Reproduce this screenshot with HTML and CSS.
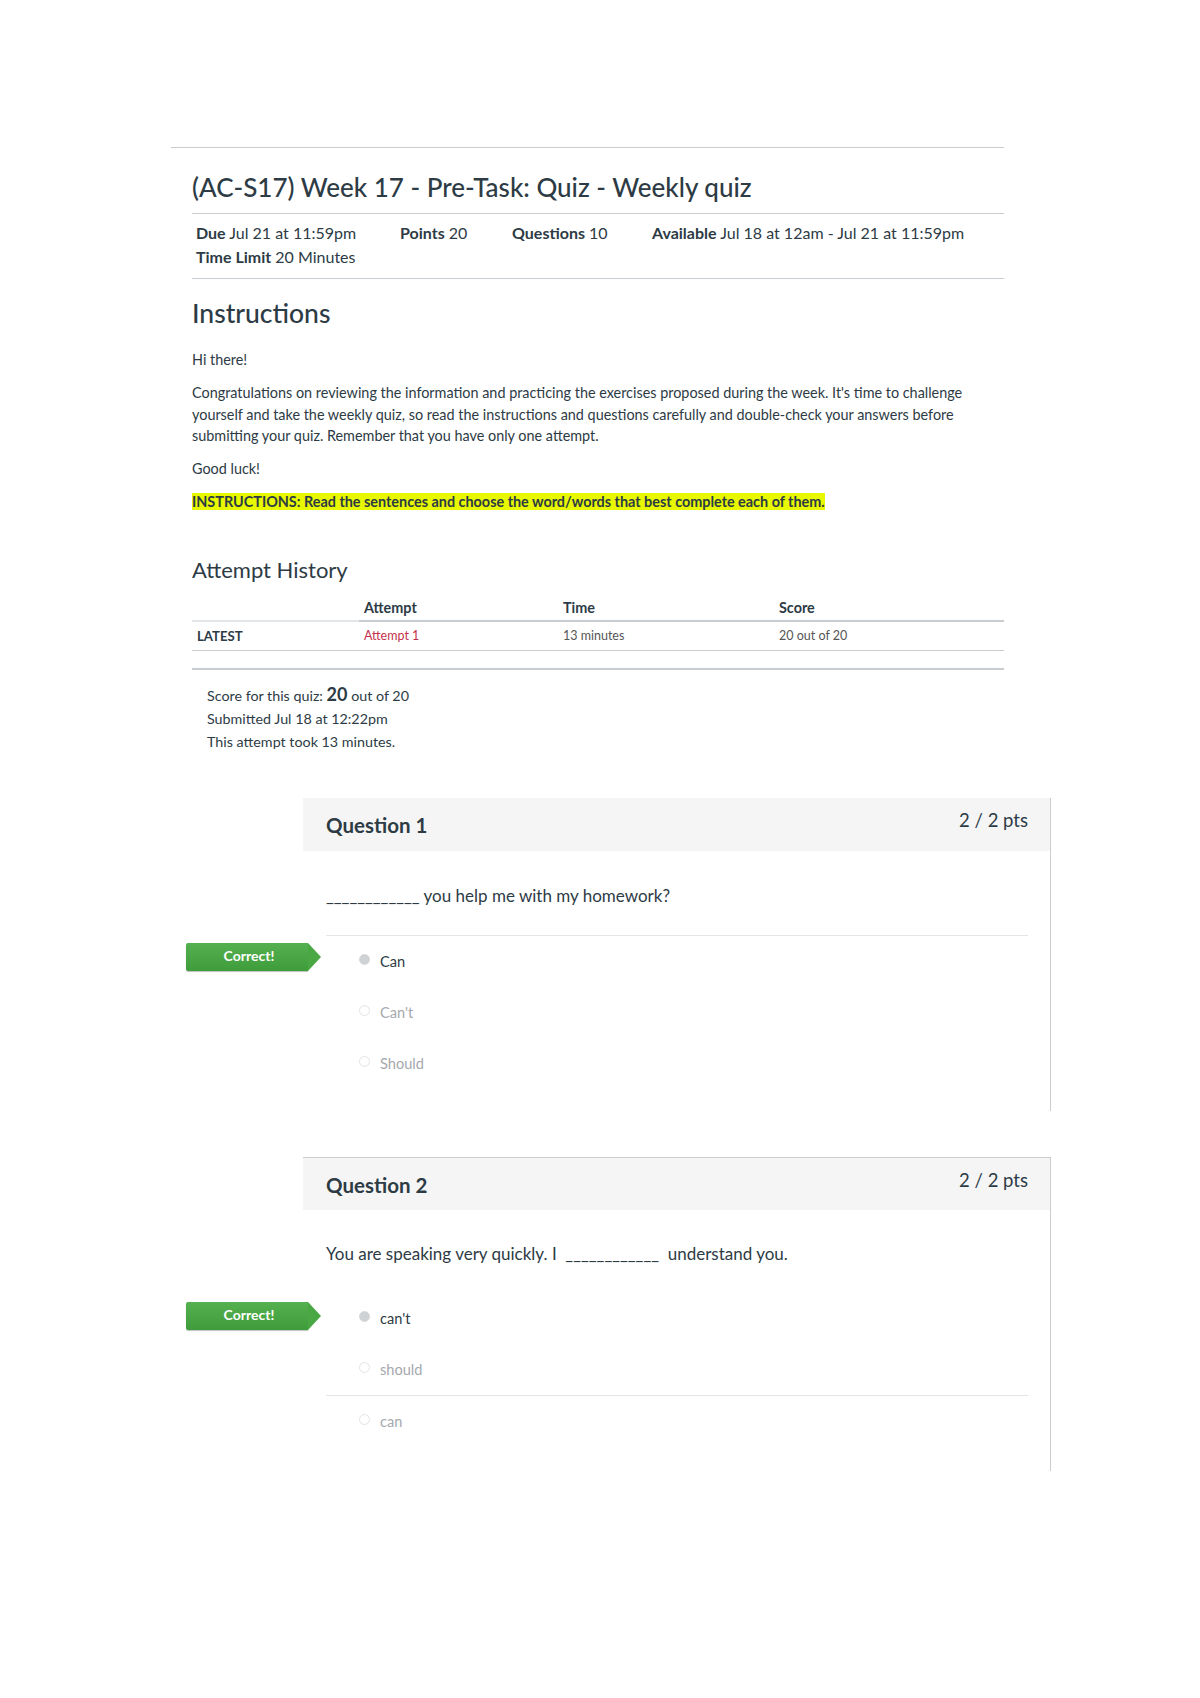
FILE: index.html
```html
<!DOCTYPE html>
<html lang="en">
<head>
<meta charset="utf-8">
<title>(AC-S17) Week 17 - Pre-Task: Quiz - Weekly quiz</title>
<link rel="stylesheet" href="styles.css">
</head>
<body>
<div class="page">
  <div class="quiz">
    <h1 class="quiz-title">(AC-S17) Week 17 - Pre-Task: Quiz - Weekly quiz</h1>
    <div class="meta">
      <div class="meta-row">
        <span class="meta-item due"><b>Due</b> Jul 21 at 11:59pm</span>
        <span class="meta-item points"><b>Points</b> 20</span>
        <span class="meta-item questions"><b>Questions</b> 10</span>
        <span class="meta-item"><b>Available</b> Jul 18 at 12am - Jul 21 at 11:59pm</span>
      </div>
      <div class="meta-row">
        <span class="meta-item"><b>Time Limit</b> 20 Minutes</span>
      </div>
    </div>

    <h2 class="instr-title">Instructions</h2>
    <div class="instr">
      <p>Hi there!</p>
      <p>Congratulations on reviewing the information and practicing the exercises proposed during the week. It's time to challenge yourself and take the weekly quiz, so read the instructions and questions carefully and double-check your answers before submitting your quiz. Remember that you have only one attempt.</p>
      <p>Good luck!</p>
      <p><mark class="hl">INSTRUCTIONS: Read the sentences and choose the word/words that best complete each of them.</mark></p>
    </div>

    <h3 class="hist-title">Attempt History</h3>
    <div class="hist">
      <div class="hist-head">
        <div class="hc hc-first"></div>
        <div class="hc">Attempt</div>
        <div class="hc">Time</div>
        <div class="hc">Score</div>
      </div>
      <div class="hist-row">
        <div class="rc latest">LATEST</div>
        <div class="rc"><a class="att-link" href="#">Attempt 1</a></div>
        <div class="rc">13 minutes</div>
        <div class="rc">20 out of 20</div>
      </div>
    </div>
    <div class="hist-sep"></div>

    <div class="score">
      <div>Score for this quiz: <span class="big">20</span> out of 20</div>
      <div>Submitted Jul 18 at 12:22pm</div>
      <div>This attempt took 13 minutes.</div>
    </div>
  </div>

  <div class="qbox q1">
    <div class="qhead">
      <span class="qname">Question 1</span>
      <span class="qpts">2 / 2 pts</span>
    </div>
    <div class="qbody">
      <div class="qtext">____________ you help me with my homework?</div>
      <div class="qsep"></div>
      <div class="answers">
        <div class="ans selected"><span class="badge">Correct!</span><span class="radio"></span>Can</div>
        <div class="ans"><span class="radio"></span>Can't</div>
        <div class="ans"><span class="radio"></span>Should</div>
      </div>
    </div>
  </div>

  <div class="qbox q2">
    <div class="qhead">
      <span class="qname">Question 2</span>
      <span class="qpts">2 / 2 pts</span>
    </div>
    <div class="qbody">
      <div class="qtext">You are speaking very quickly. I&nbsp; ____________ &nbsp;understand you.</div>
      <div class="answers">
        <div class="ans selected"><span class="badge b2">Correct!</span><span class="radio"></span>can't</div>
        <div class="ans"><span class="radio"></span>should</div>
        <div class="qsep"></div>
        <div class="ans"><span class="radio"></span>can</div>
      </div>
    </div>
  </div>
</div>
</body>
</html>
```

FILE: styles.css
```css
html, body {
  margin: 0;
  padding: 0;
  background: #ffffff;
}
body {
  font-family: Lato, "Open Sans", "Liberation Sans", sans-serif;
  color: #2d3b45;
}
.page {
  margin: 147px 0 0 171px;
  width: 833px;
  border-top: 1px solid #c7cdd1;
  padding-bottom: 200px;
}
.quiz {
  margin-left: 21px;
}
.quiz-title {
  margin: 24px 0 0;
  font-size: 26px;
  line-height: 30px;
  font-weight: 500;
  padding-bottom: 11px;
  border-bottom: 1px solid #c7cdd1;
  color: #2d3b45;
}
.meta {
  padding: 7px 0 9px 4px;
  border-bottom: 1px solid #c7cdd1;
  font-size: 16px;
  line-height: 24px;
}
.meta-row {
  display: flex;
}
.meta-item b {
  font-weight: 700;
}
.due { width: 204px; }
.points { width: 112px; }
.questions { width: 140px; }

.instr-title {
  margin: 18px 0 0;
  font-size: 26.5px;
  line-height: 32px;
  font-weight: 500;
}
.instr {
  margin-top: 20px;
  font-size: 14.4px;
  line-height: 21.6px;
  width: 790px;
}
.instr p {
  margin: 0 0 11.5px;
}
.hl {
  background: #e8f800;
  color: #2d3b45;
  font-weight: 700;
}
.hist-title {
  margin: 43px 0 0;
  font-size: 22px;
  line-height: 28px;
  font-weight: 400;
}
.hist {
  margin-top: 14px;
}
.hist-head, .hist-row {
  display: grid;
  grid-template-columns: 167px 199px 216px 1fr;
}
.hc {
  line-height: 20px;
  padding: 0 0 2px 5px;
  border-bottom: 2px solid #c7cdd1;
  font-weight: 700;
  font-size: 14.4px;
}
.hc-first {
  border-bottom-color: #e3e6e8;
}
.rc {
  line-height: 28px;
  padding-left: 5px;
  border-bottom: 1px solid #c7cdd1;
  font-size: 12.5px;
  color: #555;
}
.rc.latest {
  font-weight: 700;
  font-size: 13.2px;
  color: #2d3b45;
}
.att-link {
  color: #c4314b;
  text-decoration: none;
}
.hist-sep {
  margin-top: 17px;
  border-top: 2px solid #c7cdd1;
}
.score {
  padding: 13px 0 0 15px;
  font-size: 14.3px;
  line-height: 23px;
}
.score .big {
  font-size: 18px;
  font-weight: 700;
}

.qbox {
  margin-left: 132px;
  width: 747px;
  border-right: 1px solid #c7cdd1;
}
.q1 {
  margin-top: 45px;
}
.q2 {
  margin-top: 46px;
  border-top: 1px solid #c7cdd1;
}
.qhead {
  display: flex;
  justify-content: space-between;
  align-items: flex-start;
  background: #f5f5f5;
  height: 53px;
  padding: 0 22px 0 23px;
}
.q2 .qhead {
  height: 52px;
}
.qname {
  font-size: 20.5px;
  font-weight: 700;
  line-height: 54px;
}
.qpts {
  font-size: 18.5px;
  line-height: 44px;
}
.qbody {
  padding: 34px 22px 22px 23px;
  position: relative;
}
.q2 .qbody {
  padding-top: 33px;
  padding-bottom: 24px;
}
.qtext {
  font-size: 17px;
  line-height: 22px;
  margin-bottom: 28px;
}
.qsep {
  border-top: 1px solid #e3e6e8;
}
.ans {
  position: relative;
  height: 51px;
  line-height: 51px;
  padding-left: 33px;
  font-size: 14.6px;
  color: #a5a9ad;
  display: flex;
  align-items: center;
}
.ans.selected {
  color: #2d3b45;
}
.radio {
  width: 9px;
  height: 9px;
  border: 1px solid #e2e4e6;
  border-radius: 50%;
  margin-right: 10px;
  background: #fff;
  position: relative;
  top: -2px;
}
.ans.selected .radio {
  background: #cfd2d4;
  border-color: #d7d9db;
}
.badge {
  position: absolute;
  left: -140px;
  top: 7px;
  width: 122px;
  height: 28px;
  line-height: 26px;
  text-align: center;
  color: #fff;
  font-size: 14px;
  font-weight: 700;
  background: linear-gradient(#55b14f, #3f9c3a);
  border-radius: 2px 0 0 2px;
  box-shadow: 0 1px 1px rgba(0,0,0,0.25);
  padding-left: 4px;
  box-sizing: border-box;
}
.badge::after {
  content: "";
  position: absolute;
  right: -13px;
  top: 0;
  width: 0;
  height: 0;
  border-top: 14px solid transparent;
  border-bottom: 14px solid transparent;
  border-left: 13px solid #4aa844;
}
.badge.b2 {
  top: 9px;
}
```
